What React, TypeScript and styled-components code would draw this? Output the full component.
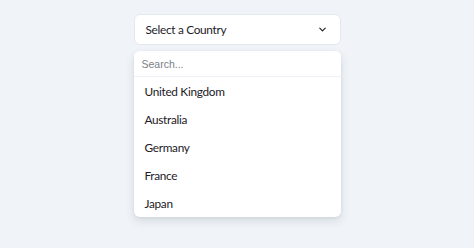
import { useState } from "react";
import styled, { createGlobalStyle } from "styled-components";
import { ChevronDown } from "lucide-react";

const GlobalStyle = createGlobalStyle`
  html, body {
    margin: 0;
    padding: 0;
    background: #f0f4f8;
  }
  body {
    font-family: Lato, "Noto Sans", sans-serif;
    color: #1c2026;
  }
`;

const Page = styled.div`
  min-height: 248px;
  display: flex;
  justify-content: center;
  padding-top: 14px;
  box-sizing: border-box;
`;

const SelectorContainer = styled.div`
  position: relative;
  width: 207px;
`;

const Trigger = styled.div`
  height: 31px;
  box-sizing: border-box;
  background: #ffffff;
  border: 1px solid #e3e8ef;
  border-radius: 6px;
  padding: 0 12px 0 11px;
  display: flex;
  align-items: center;
  justify-content: space-between;
  font-size: 11.8px;
  letter-spacing: -0.3px;
  cursor: pointer;
`;

const Dropdown = styled.div`
  margin-top: 6px;
  background: #ffffff;
  border-radius: 6px;
  box-shadow: 0 4px 10px rgba(30, 41, 59, 0.12), 0 1px 3px rgba(30, 41, 59, 0.06);
  overflow: hidden;
`;

const SearchInput = styled.input`
  display: block;
  width: 100%;
  height: 26px;
  box-sizing: border-box;
  border: none;
  border-bottom: 1px solid #eef1f5;
  outline: none;
  padding: 1px 8px 0;
  font-family: "Liberation Sans", Arial, sans-serif;
  font-size: 10.5px;
  color: #333;
  &::placeholder {
    color: #7a7f87;
  }
`;

const List = styled.ul`
  list-style: none;
  margin: 0;
  padding: 0;
`;

const Item = styled.li`
  height: 28px;
  display: flex;
  align-items: center;
  padding: 0 11px;
  font-size: 11.8px;
  letter-spacing: -0.3px;
  cursor: pointer;
  &:hover {
    background: #f4f6f9;
  }
`;

const countries = ["United Kingdom", "Australia", "Germany", "France", "Japan"];

const App = () => {
  const [query, setQuery] = useState("");
  const [selected, setSelected] = useState<string | null>(null);
  const shown = countries.filter((c) =>
    c.toLowerCase().includes(query.toLowerCase())
  );

  return (
    <>
      <GlobalStyle />
      <Page>
        <SelectorContainer>
          <Trigger>
            <span>{selected ?? "Select a Country"}</span>
            <ChevronDown size={11} strokeWidth={2.5} />
          </Trigger>
          <Dropdown>
            <SearchInput
              placeholder="Search..."
              value={query}
              onChange={(e) => setQuery(e.target.value)}
            />
            <List>
              {shown.map((c) => (
                <Item key={c} onClick={() => setSelected(c)}>
                  {c}
                </Item>
              ))}
            </List>
          </Dropdown>
        </SelectorContainer>
      </Page>
    </>
  );
};

export default App;
